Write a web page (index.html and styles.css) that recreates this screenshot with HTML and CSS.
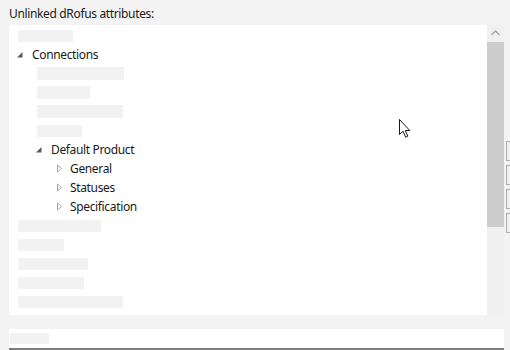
FILE: index.html
```html
<!DOCTYPE html>
<html>
<head>
<meta charset="utf-8">
<link rel="stylesheet" href="styles.css">
</head>
<body>
<div class="page">
  <div class="label">Unlinked dRofus attributes:</div>
  <div class="main">
    <div class="panel">
      <div class="tree">
        <div class="row l0"><span class="bar" style="width:55px"></span></div>
        <div class="row l0 node">
          <svg class="tog" width="15" height="8" viewBox="0 0 15 8"><path d="M5.5 1 L5.5 6.5 L0 6.5 Z" fill="#5a5a5a"/></svg>
          <span class="txt">Connections</span>
        </div>
        <div class="row l1"><span class="bar tall" style="width:87px"></span></div>
        <div class="row l1"><span class="bar tall" style="width:53px"></span></div>
        <div class="row l1"><span class="bar tall" style="width:86px"></span></div>
        <div class="row l1"><span class="bar" style="width:45px"></span></div>
        <div class="row l1 node">
          <svg class="tog" width="15" height="8" viewBox="0 0 15 8"><path d="M5.5 1 L5.5 6.5 L0 6.5 Z" fill="#5a5a5a"/></svg>
          <span class="txt">Default Product</span>
        </div>
        <div class="row l2 node">
          <svg class="tog" width="15" height="9" viewBox="0 0 15 9"><path d="M2.5 1 L6.5 4.5 L2.5 8 Z" fill="none" stroke="#a6a6a6" stroke-width="1"/></svg>
          <span class="txt">General</span>
        </div>
        <div class="row l2 node">
          <svg class="tog" width="15" height="9" viewBox="0 0 15 9"><path d="M2.5 1 L6.5 4.5 L2.5 8 Z" fill="none" stroke="#a6a6a6" stroke-width="1"/></svg>
          <span class="txt">Statuses</span>
        </div>
        <div class="row l2 node">
          <svg class="tog" width="15" height="9" viewBox="0 0 15 9"><path d="M2.5 1 L6.5 4.5 L2.5 8 Z" fill="none" stroke="#a6a6a6" stroke-width="1"/></svg>
          <span class="txt">Specification</span>
        </div>
        <div class="row l0"><span class="bar" style="width:83px"></span></div>
        <div class="row l0"><span class="bar" style="width:46px"></span></div>
        <div class="row l0"><span class="bar" style="width:70px"></span></div>
        <div class="row l0"><span class="bar" style="width:66px"></span></div>
        <div class="row l0"><span class="bar" style="width:105px"></span></div>
      </div>
      <div class="scrollbar">
        <div class="sb-btn">
          <svg width="17" height="17" viewBox="0 0 17 17"><path d="M4.5 10 L8.5 6 L12.5 10" fill="none" stroke="#a3a3a3" stroke-width="1.3"/></svg>
        </div>
        <div class="sb-thumb"></div>
        <div class="sb-track"></div>
      </div>
    </div>
    <div class="side">
      <div class="sbtn"></div>
      <div class="sbtn"></div>
      <div class="sbtn"></div>
      <div class="sbtn"></div>
    </div>
  </div>
  <div class="bottom"><span class="bar" style="width:39px"></span></div>
</div>
<svg class="cursor" width="13" height="20" viewBox="0 0 13 20"><path d="M0.5 0.5 L0.5 15.5 L4 12.2 L6.6 18.2 L8.8 17.2 L6.3 11.5 L10.8 11.5 Z" fill="#fff" stroke="#000" stroke-width="0.9" stroke-linejoin="miter"/></svg>
</body>
</html>
```
FILE: styles.css
```css
html, body {
  margin: 0;
  padding: 0;
  background: #f3f3f3;
  overflow: hidden;
  width: 510px;
  height: 350px;
}
.page {
  font-family: "Noto Sans", "Segoe UI", sans-serif;
  font-size: 12px;
  letter-spacing: -0.35px;
  color: #1a1a1a;
}
.label {
  height: 25px;
  padding-left: 9px;
  line-height: 27px;
  box-sizing: border-box;
  padding-top: 0;
}
.main {
  display: flex;
  height: 290px;
}
.panel {
  margin-left: 9px;
  width: 495px;
  display: flex;
  background: #fff;
}
.tree {
  flex: 1;
  padding-top: 1px;
}
.row {
  height: 19px;
  display: flex;
  align-items: center;
}
.row.l0 { padding-left: 9px; }
.row.l1 { padding-left: 28px; }
.row.l0.node { padding-left: 8px; }
.row.l1.node { padding-left: 27px; }
.row.l2.node { padding-left: 46px; }
.tog { flex: none; display: block; }
.txt { line-height: 19px; white-space: nowrap; }
.bar {
  display: block;
  height: 12px;
  background: #f2f2f2;
}
.bar.tall { height: 13px; }
.scrollbar {
  width: 17px;
  display: flex;
  flex-direction: column;
  background: #f0f0f0;
}
.sb-btn {
  height: 17px;
}
.sb-btn svg { display: block; }
.sb-thumb {
  height: 185px;
  background: #cdcdcd;
}
.sb-track { flex: 1; }
.side {
  width: 6px;
  overflow: visible;
  padding-top: 116px;
  display: flex;
  flex-direction: column;
  gap: 4px;
}
.sbtn {
  margin-left: 2px;
  width: 20px;
  height: 20px;
  box-sizing: border-box;
  border: 1px solid #adadad;
  background: #f0f0f0;
  flex: none;
}
.bottom {
  margin-top: 14px;
  margin-left: 9px;
  width: 495px;
  height: 21px;
  box-sizing: border-box;
  background: #fff;
  border-bottom: 2px solid #7f7f7f;
  padding-top: 4px;
  padding-left: 1px;
}
.bottom .bar { height: 11px; }
.cursor {
  position: absolute;
  left: 399px;
  top: 119px;
}
```
